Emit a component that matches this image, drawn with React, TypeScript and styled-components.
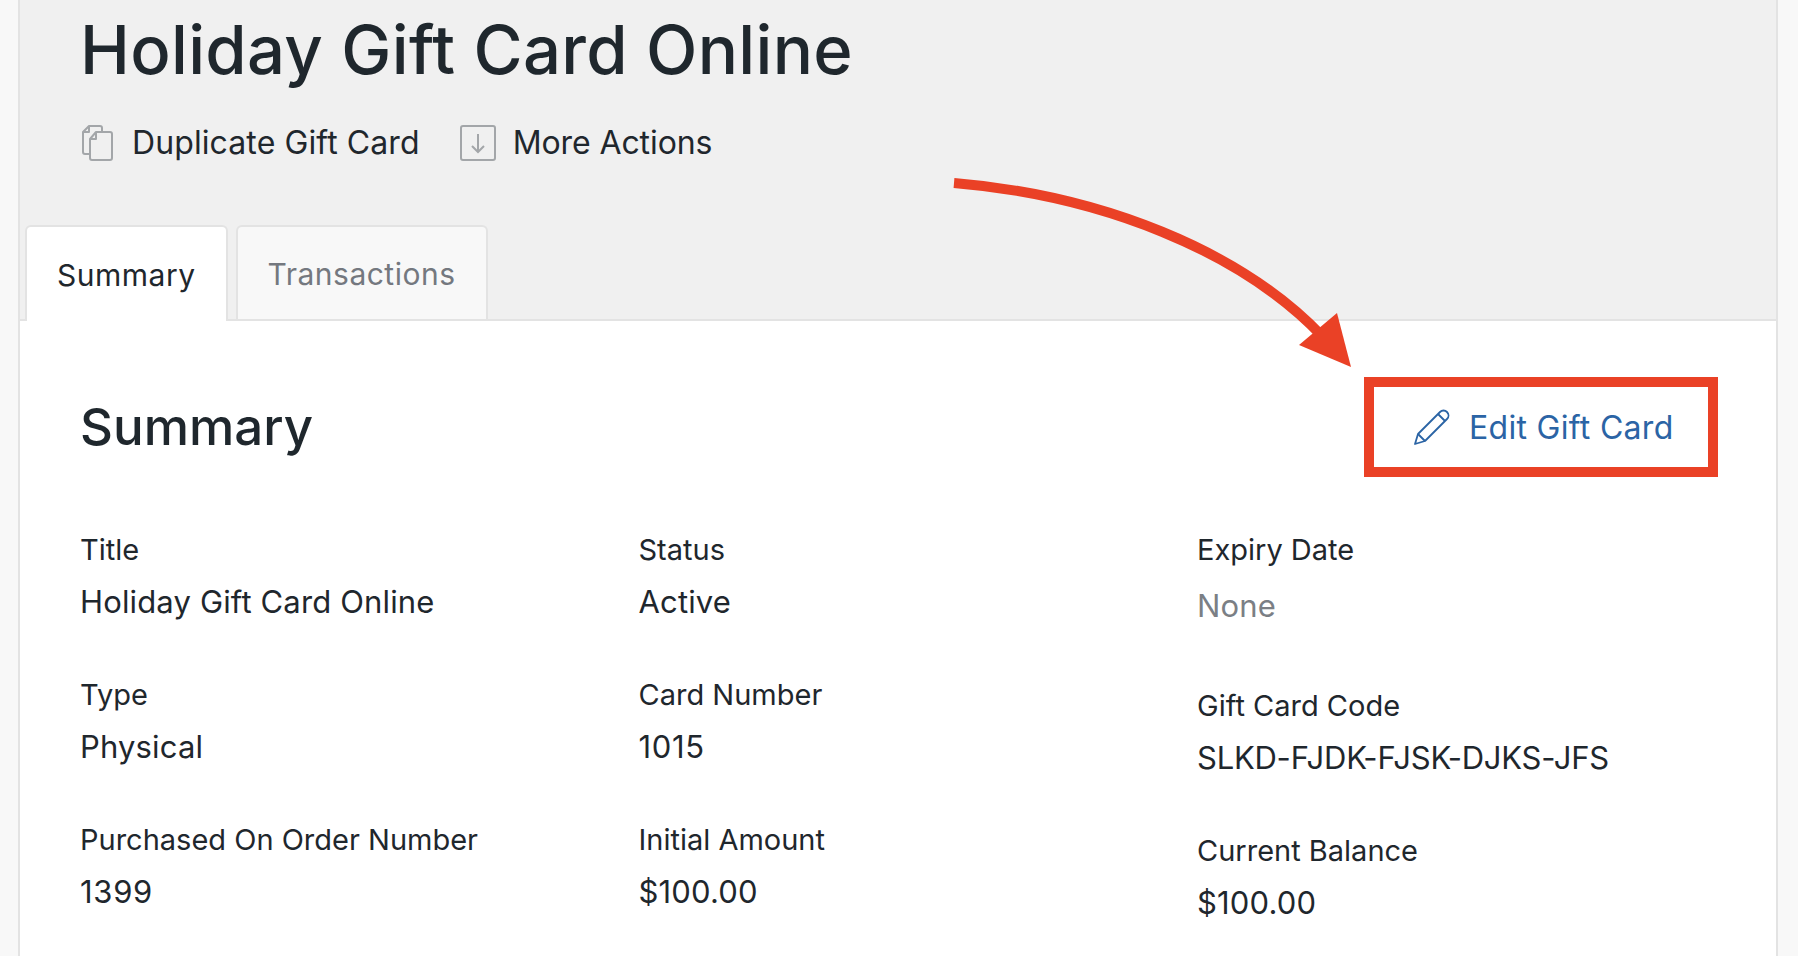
import React from 'react'
import styled, { createGlobalStyle } from 'styled-components'

const GlobalStyle = createGlobalStyle`
  html, body {
    margin: 0;
    padding: 0;
    height: 100%;
    overflow: hidden;
    background: #f8f8f8;
    font-family: Inter, "Liberation Sans", sans-serif;
    color: #1f272d;
  }
  * { box-sizing: border-box; }
`

const Page = styled.div`
  position: relative;
  width: 1798px;
  height: 956px;
  overflow: hidden;
  padding: 0 20px 0 18px;
`

const Shell = styled.main`
  height: 100%;
  border-left: 2px solid #e3e3e3;
  border-right: 2px solid #e3e3e3;
  background: #fff;
`

const Header = styled.header`
  height: 321px;
  background: #f0f0f0;
  border-bottom: 2px solid #e3e3e3;
  display: flex;
  flex-direction: column;
`

const Title = styled.h1`
  margin: 0;
  padding: 10px 0 0 60px;
  height: 100px;
  font-size: 67px;
  line-height: 80px;
  font-weight: 500;
  letter-spacing: 0.3px;
`

const Actions = styled.div`
  display: flex;
  align-items: center;
  gap: 40px;
  padding: 26px 0 0 62px;
`

const Action = styled.a<{ $gap: number; $spacing: number }>`
  display: flex;
  align-items: center;
  gap: ${p => p.$gap}px;
  font-size: 32px;
  line-height: 36px;
  margin-top: -1px;
  letter-spacing: ${p => p.$spacing}px;
`

const Tabs = styled.nav`
  display: flex;
  align-items: flex-end;
  gap: 8px;
  margin-top: auto;
  margin-bottom: -2px;
  padding-left: 5px;
`

const Tab = styled.a<{ $active?: boolean }>`
  height: ${p => (p.$active ? '96px' : '94px')};
  margin-bottom: ${p => (p.$active ? '0' : '2px')};
  padding: 2px 30px 0;
  display: flex;
  align-items: center;
  font-size: 30px;
  letter-spacing: 0.5px;
  border: 2px solid #e3e3e3;
  border-bottom: none;
  border-radius: 6px 6px 0 0;
  background: ${p => (p.$active ? '#fff' : '#f8f8f8')};
  color: ${p => (p.$active ? '#1f272d' : '#74787f')};
`

const Body = styled.section`
  padding: 56px 58px 0 60px;
`

const SummaryRow = styled.div`
  display: flex;
  align-items: center;
  justify-content: space-between;
  height: 100px;
`

const Heading = styled.h2`
  margin: 0 0 2px;
  font-size: 51px;
  font-weight: 500;
`

const EditLink = styled.a`
  width: 354px;
  height: 100px;
  border: 10px solid #ea4126;
  display: flex;
  align-items: center;
  gap: 19px;
  padding-left: 40px;
  font-size: 32px;
  letter-spacing: 0.3px;
  color: #2b64a5;
`

const Columns = styled.div`
  display: grid;
  grid-template-columns: 558.5px 558.5px 1fr;
  margin-top: 53px;
`

const Column = styled.div`
  display: flex;
  flex-direction: column;
`

const Field = styled.div<{ $tall?: boolean }>`
  height: ${p => (p.$tall ? '156px' : '145px')};
`

const Label = styled.div`
  font-size: 29px;
  line-height: 40px;
`

const Value = styled.div<{ $muted?: boolean; $spacing?: number }>`
  font-size: 31px;
  line-height: 40px;
  letter-spacing: ${p => p.$spacing ?? 0.15}px;
  margin-top: ${p => (p.$muted ? '16px' : '11.5px')};
  color: ${p => (p.$muted ? '#7b7f85' : '#1f272d')};
`

const ArrowOverlay = styled.svg`
  position: absolute;
  left: 0;
  top: 0;
  pointer-events: none;
`

const DuplicateIcon = () => (
  <svg width="31" height="36" viewBox="0 0 31 36" fill="none" stroke="#a3a6a9" strokeWidth="2" strokeLinejoin="round">
    <path d="M8 29H3a2 2 0 0 1-2-2V7l6-6h11a2 2 0 0 1 2 2v4" />
    <path d="M7 1v6H1" />
    <path d="M8 14l6-7h14a2 2 0 0 1 2 2v24a2 2 0 0 1-2 2H10a2 2 0 0 1-2-2V14z" fill="#f0f0f0" />
    <path d="M14 7v7H8" />
  </svg>
)

const DownIcon = () => (
  <svg width="36" height="36" viewBox="0 0 36 36" fill="none" stroke="#a3a6a9" strokeWidth="2">
    <rect x="1" y="1" width="34" height="34" rx="2" />
    <path d="M18 9v18M12 21l6 6 6-6" />
  </svg>
)

const PencilIcon = () => (
  <svg width="36" height="36" viewBox="0 0 36 36" fill="none" stroke="#2b64a5" strokeWidth="1.8" strokeLinejoin="round">
    <path d="M1 35l3-10L26 3c2-2 5-2 7 0s2 5 0 7L11 32z" />
    <path d="M4 25l7 7M24 5l7 7" />
  </svg>
)

const leftFields: [string, string, number?][] = [
  ['Title', 'Holiday Gift Card Online'],
  ['Type', 'Physical'],
  ['Purchased On Order Number', '1399', 0.7],
]

const middleFields: [string, string, number?][] = [
  ['Status', 'Active'],
  ['Card Number', '1015', 0.7],
  ['Initial Amount', '$100.00'],
]

const App = () => {
  return (
    <Page>
      <GlobalStyle />
      <Shell>
        <Header>
          <Title>Holiday Gift Card Online</Title>
          <Actions>
            <Action $gap={19} $spacing={0.1}><DuplicateIcon />Duplicate Gift Card</Action>
            <Action $gap={17} $spacing={-0.1}><DownIcon />More Actions</Action>
          </Actions>
          <Tabs>
            <Tab $active>Summary</Tab>
            <Tab>Transactions</Tab>
          </Tabs>
        </Header>
        <Body>
          <SummaryRow>
            <Heading>Summary</Heading>
            <EditLink><PencilIcon />Edit Gift Card</EditLink>
          </SummaryRow>
          <Columns>
            <Column>
              {leftFields.map(([k, v, s]) => (
                <Field key={k}><Label>{k}</Label><Value $spacing={s}>{v}</Value></Field>
              ))}
            </Column>
            <Column>
              {middleFields.map(([k, v, s]) => (
                <Field key={k}><Label>{k}</Label><Value $spacing={s}>{v}</Value></Field>
              ))}
            </Column>
            <Column>
              <Field $tall><Label>Expiry Date</Label><Value $muted>None</Value></Field>
              <Field><Label>Gift Card Code</Label><Value $spacing={-0.25}>SLKD-FJDK-FJSK-DJKS-JFS</Value></Field>
              <Field><Label>Current Balance</Label><Value>$100.00</Value></Field>
            </Column>
          </Columns>
        </Body>
      </Shell>
      <ArrowOverlay width="1798" height="956" viewBox="0 0 1798 956">
        <path d="M954 183C1100 195 1240 250 1322 336" fill="none" stroke="#ea4126" strokeWidth="10" />
        <path d="M1337 313L1351 367L1299 345z" fill="#ea4126" />
      </ArrowOverlay>
    </Page>
  )
}

export default App
